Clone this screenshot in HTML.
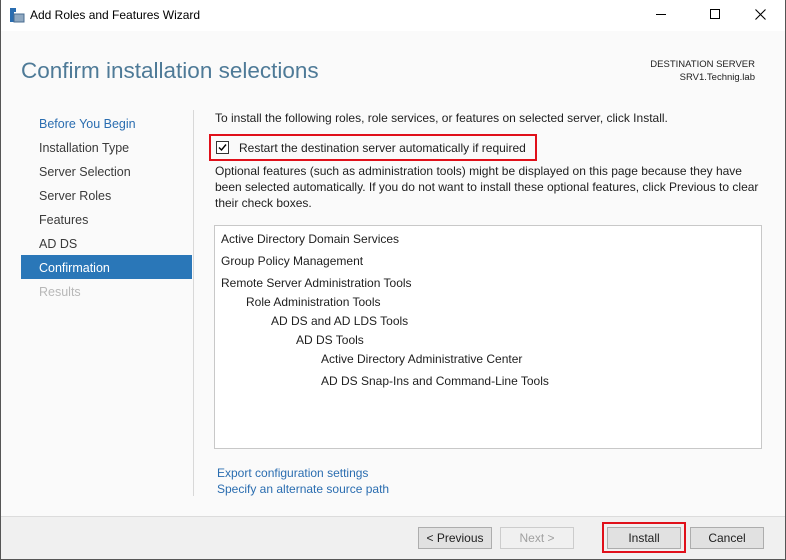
<!DOCTYPE html><html><head><style>
*{margin:0;padding:0;box-sizing:border-box}
body{width:786px;height:560px;overflow:hidden;font-family:"Liberation Sans",sans-serif;font-size:12px;color:#1e1e1e;background:#fafafa;position:relative}
.a{position:absolute;white-space:nowrap}
.nav{left:39px;font-size:12.5px;color:#3a3a3a}
.btn{position:absolute;top:527px;height:22px;border:1px solid #adadad;background:#e1e1e1;text-align:center;line-height:20px;font-size:12px}
.t{position:absolute;font-size:12px;color:#1e1e1e;white-space:nowrap}
</style></head><body>
<div class="a" style="left:0;top:0;width:786px;height:31px;background:#fff"></div>
<svg class="a" style="left:9px;top:7px" width="16" height="16"><rect x="1" y="1" width="6" height="4" fill="#2a6db0"/><rect x="1" y="5" width="4" height="10" fill="#2a6db0"/><rect x="5" y="7" width="10" height="8" fill="#8fa8c0" stroke="#4a6c90"/></svg>
<div class="a" style="left:30px;top:8px;font-size:12px;color:#000">Add Roles and Features Wizard</div>
<div class="a" style="left:656px;top:14px;width:10px;height:1px;background:#000"></div>
<div class="a" style="left:710px;top:9px;width:10px;height:10px;border:1px solid #000"></div>
<svg class="a" style="left:755px;top:9px" width="11" height="11"><path d="M0.5 0.5L10.5 10.5M10.5 0.5L0.5 10.5" stroke="#000" stroke-width="1.1"/></svg>
<div class="a" style="left:21px;top:58px;font-size:22.5px;color:#4e7a97;font-weight:300">Confirm installation selections</div>
<div class="a" style="right:31px;top:58px;font-size:9.5px;text-align:right;line-height:13px">DESTINATION SERVER<br>SRV1.Technig.lab</div>
<div class="a nav" style="top:117px;color:#2a6db0">Before You Begin</div>
<div class="a nav" style="top:141px">Installation Type</div>
<div class="a nav" style="top:165px">Server Selection</div>
<div class="a nav" style="top:189px">Server Roles</div>
<div class="a nav" style="top:213px">Features</div>
<div class="a nav" style="top:237px">AD DS</div>
<div class="a" style="left:21px;top:255px;width:171px;height:24px;background:#2a77b8"></div>
<div class="a nav" style="top:261px;color:#fff">Confirmation</div>
<div class="a nav" style="top:285px;color:#b8b8b8">Results</div>
<div class="a" style="left:193px;top:110px;width:1px;height:386px;background:#d8d8d8"></div>
<div class="t" style="left:215px;top:111px">To install the following roles, role services, or features on selected server, click Install.</div>
<div class="a" style="left:209px;top:134px;width:328px;height:27px;border:2px solid #e0101a"></div>
<div class="a" style="left:216px;top:141px;width:13px;height:13px;border:1px solid #333;background:#fff"></div>
<svg class="a" style="left:216px;top:141px" width="13" height="13"><path d="M3 6.5L5.5 9L10 3.5" stroke="#000" stroke-width="1.4" fill="none"/></svg>
<div class="t" style="left:239px;top:141px">Restart the destination server automatically if required</div>
<div class="t" style="left:215px;top:163px;line-height:16px">Optional features (such as administration tools) might be displayed on this page because they have<br>been selected automatically. If you do not want to install these optional features, click Previous to clear<br>their check boxes.</div>
<div class="a" style="left:214px;top:225px;width:548px;height:224px;border:1px solid #c8c8c8;background:#fff"></div>
<div class="t" style="left:221px;top:232px">Active Directory Domain Services</div>
<div class="t" style="left:221px;top:254px">Group Policy Management</div>
<div class="t" style="left:221px;top:276px">Remote Server Administration Tools</div>
<div class="t" style="left:246px;top:295px">Role Administration Tools</div>
<div class="t" style="left:271px;top:314px">AD DS and AD LDS Tools</div>
<div class="t" style="left:296px;top:333px">AD DS Tools</div>
<div class="t" style="left:321px;top:352px">Active Directory Administrative Center</div>
<div class="t" style="left:321px;top:374px">AD DS Snap-Ins and Command-Line Tools</div>
<div class="t" style="left:217px;top:466px;color:#2a6db0">Export configuration settings</div>
<div class="t" style="left:217px;top:482px;color:#2a6db0">Specify an alternate source path</div>
<div class="a" style="left:0;top:516px;width:786px;height:44px;background:#f0f0f0;border-top:1px solid #dcdcdc"></div>
<div class="btn" style="left:418px;width:74px">&lt; Previous</div>
<div class="btn" style="left:500px;width:74px;background:#f0f0f0;border-color:#ccc;color:#a0a0a0">Next &gt;</div>
<div class="a" style="left:602px;top:522px;width:84px;height:31px;border:2px solid #e0101a"></div>
<div class="btn" style="left:607px;width:74px">Install</div>
<div class="btn" style="left:690px;width:74px">Cancel</div>
<div class="a" style="left:0;top:0;width:786px;height:560px;border:1px solid #555;border-top:none"></div>
</body></html>
